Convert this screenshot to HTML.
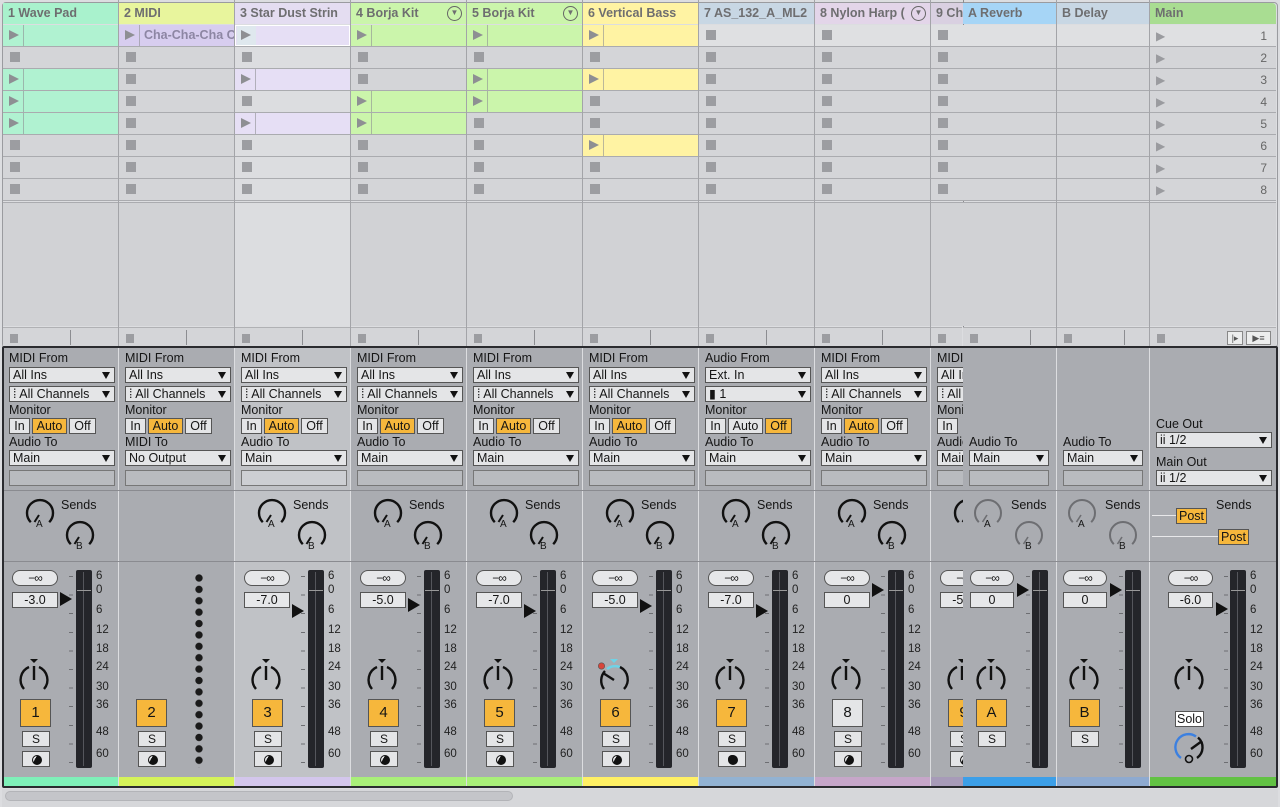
<!DOCTYPE html>
<html><head><meta charset="utf-8">
<style>
*{margin:0;padding:0;box-sizing:border-box}
body{width:1280px;height:807px;position:relative;overflow:hidden;background:#dcdde0;font-family:"Liberation Sans",sans-serif;color:#151515}
.col{position:absolute;top:0;width:116px;height:789px;overflow:hidden}
.hd{position:absolute;left:0;top:3px;width:115px;height:21px;font-size:12.5px;font-weight:bold;color:#6e6e70;line-height:20px;padding-left:5px;white-space:nowrap;overflow:hidden}
.slots{position:absolute;left:0;top:25px;width:115px;height:176px;
background:
linear-gradient(to bottom,transparent 5px,#9c9da1 5px,#9c9da1 15px,transparent 15px) 7px 0/10px 22px repeat-y,
linear-gradient(to bottom,transparent 21px,#aaabaf 21px) 0 0/100% 22px repeat-y,
linear-gradient(#dfe0e2,#dfe0e2) 0 0/100% 21px no-repeat,#d4d5d8}
.empty{position:absolute;left:0;top:202px;width:115px;height:124px;background:#d1d2d5;border-top:1px solid #aaabaf}
.stop{position:absolute;left:0;top:327px;width:115px;height:20px;background:#d4d5d8;border-top:1px solid #b0b1b4}
.stop:before{content:"";position:absolute;left:7px;top:6px;width:8px;height:9px;background:#9c9da1}
.stop:after{content:"";position:absolute;left:67px;top:2px;width:1px;height:15px;background:#8c8d91}
.vs{position:absolute;right:0;top:0;width:1px;height:347px;background:#a3a4a8}
.clip{position:absolute;left:0;width:115px;height:21px}
.clip i{position:absolute;left:6px;top:5px;border-left:10px solid #8e8f93;border-top:5.5px solid transparent;border-bottom:5.5px solid transparent}
.clip b{position:absolute;left:20px;top:0;width:1px;height:21px;background:#8e8f93;opacity:.6}
.mx{position:absolute;left:0;top:348px;width:115px;height:429px;background:#aaacb1}
.sel .mx{background:#c0c2c6}
.hr1{position:absolute;left:0;top:142px;width:116px;height:1px;background:#8a8b90}
.hr2{position:absolute;left:0;top:213px;width:116px;height:1px;background:#8a8b90}
.rs{position:absolute;right:-1px;top:347px;width:1px;height:440px;background:#7d7e83}
.lb{position:absolute;left:6px;font-size:12.5px;line-height:14px;white-space:nowrap}
.dd{position:absolute;left:6px;width:106px;height:16px;background:#e4e5e7;border:1px solid #555;font-size:12.5px;line-height:14px;padding-left:3px;white-space:nowrap;overflow:hidden}
.dd:after{content:"";position:absolute;right:4px;top:4px;border-top:7px solid #111;border-left:4.5px solid transparent;border-right:4.5px solid transparent}
.box{position:absolute;left:6px;width:106px;height:16px;background:#b9bbbf;border:1px solid #777}
.sel .box{background:#cdcfd3}
.bt{position:absolute;height:16px;background:#e4e5e7;border:1px solid #555;font-size:12.5px;line-height:14px;text-align:center}
.on{background:#f6b73c}
.sends{position:absolute;left:58px;top:150px;font-size:12.5px}
.inf{position:absolute;left:9px;top:222px;width:46px;height:16px;border:1px solid #555;border-radius:8px;background:#e6e7e9;font-size:12px;line-height:14px;text-align:center;letter-spacing:-1px}
.val{position:absolute;left:9px;top:244px;width:46px;height:16px;border:1px solid #555;background:#e6e7e9;font-size:12.5px;line-height:14px;text-align:center}
.tri{position:absolute;left:57px;border-left:12px solid #111;border-top:7.5px solid transparent;border-bottom:7.5px solid transparent}
.met{position:absolute;left:73px;top:222px;width:16px;height:198px;background:#24252a;border-radius:2px}
.met:before{content:"";position:absolute;left:7px;top:2px;width:1px;height:194px;background:#55565c}
.met:after{content:"";position:absolute;left:1px;top:20px;width:14px;height:1px;background:#999}
.tk{position:absolute;left:66px;top:228px;width:4px;height:188px;background:repeating-linear-gradient(to bottom,#6d6e72 0,#6d6e72 1px,transparent 1px,transparent 18.6px)}
.sc{position:absolute;left:93px;font-size:11.5px;line-height:12px;color:#222}
.num{position:absolute;left:17px;top:351px;width:31px;height:28px;border:1px solid #555;background:#f6b73c;font-size:15px;line-height:26px;text-align:center}
.sb{position:absolute;left:19px;top:383px;width:28px;height:16px;border:1px solid #555;background:#e4e5e7;font-size:12px;line-height:14px;text-align:center}
.mb{position:absolute;left:19px;top:403px;width:28px;height:16px;border:1px solid #555;background:#e4e5e7}
.mb:after{content:"";position:absolute;left:9px;top:3px;width:8px;height:8px;border-radius:50%;background:linear-gradient(120deg,#e4e5e7 0 30%,#111 30%);border:1.5px solid #111}
.strip{position:absolute;left:0;top:777px;width:115px;height:9px}
svg{position:absolute;overflow:visible}
</style></head><body>
<svg width="0" height="0" style="position:absolute">
<defs>
<symbol id="sk" viewBox="0 0 30 34"><path d="M5.8 24.2 A13 13 0 1 1 24.2 24.2" fill="none" stroke="#111" stroke-width="2.4"/><line x1="14" y1="17" x2="9.5" y2="24" stroke="#111" stroke-width="2"/></symbol>
<symbol id="skg" viewBox="0 0 30 34"><path d="M5.8 24.2 A13 13 0 1 1 24.2 24.2" fill="none" stroke="#6d6e72" stroke-width="2"/><line x1="14" y1="17" x2="9.5" y2="24" stroke="#6d6e72" stroke-width="1.6"/></symbol>
<symbol id="pk" viewBox="0 0 34 40"><path d="M7 31 A14 14 0 0 1 12 9" fill="none" stroke="#111" stroke-width="2.4"/><path d="M22 9 A14 14 0 0 1 27 31" fill="none" stroke="#111" stroke-width="2.4"/><line x1="17" y1="8" x2="17" y2="22" stroke="#111" stroke-width="2.4"/><path d="M13 1 L21 1 L17 5 Z" fill="#111"/></symbol>
</defs></svg>

<div style="position:absolute;left:2px;top:2px;width:1276px;height:346px;border:1px solid #9a9b9f;border-radius:4px"></div>

<!-- Track 1 -->
<div class="col" style="left:3px">
<div class="hd" style="background:#a9f2cd">1 Wave Pad</div>
<div class="slots"></div>
<div class="clip" style="top:25px;background:#b0f2d1"><i></i><b></b></div>
<div class="clip" style="top:69px;background:#b0f2d1"><i></i><b></b></div>
<div class="clip" style="top:91px;background:#b0f2d1"><i></i><b></b></div>
<div class="clip" style="top:113px;background:#b0f2d1"><i></i><b></b></div>
<div class="empty"></div><div class="stop"></div><div class="vs"></div>
<div class="mx"><div class="hr1"></div><div class="hr2"></div>
<div class="lb" style="top:3px">MIDI From</div><div class="dd" style="top:19px">All Ins</div><div class="dd" style="top:38px">⁞ All Channels</div>
<div class="lb" style="top:55px">Monitor</div>
<div class="bt" style="left:6px;top:70px;width:21px">In</div><div class="bt on" style="left:29px;top:70px;width:35px">Auto</div><div class="bt" style="left:66px;top:70px;width:27px">Off</div>
<div class="lb" style="top:87px">Audio To</div><div class="dd" style="top:102px">Main</div><div class="box" style="top:122px"></div>
<svg style="left:22px;top:150px" width="30" height="34"><use href="#sk"/></svg><div style="position:absolute;left:33px;top:171px;font-size:10px">A</div>
<svg style="left:62px;top:172px" width="30" height="34"><use href="#sk"/></svg><div style="position:absolute;left:73px;top:193px;font-size:10px">B</div>
<div class="sends">Sends</div>
<div class="inf">−∞</div><div class="val">-3.0</div><div class="tri" style="top:244px"></div>
<div class="tk"></div><div class="met"></div>
<div class="sc" style="top:222px">6</div><div class="sc" style="top:236px">0</div><div class="sc" style="top:256px">6</div><div class="sc" style="top:276px">12</div><div class="sc" style="top:295px">18</div><div class="sc" style="top:313px">24</div><div class="sc" style="top:333px">30</div><div class="sc" style="top:351px">36</div><div class="sc" style="top:378px">48</div><div class="sc" style="top:400px">60</div>
<svg style="left:14px;top:310px" width="34" height="40"><use href="#pk"/></svg>
<div class="num">1</div><div class="sb">S</div><div class="mb"></div>
</div>
<div class="rs"></div>
<div class="strip" style="background:#7ff0b9"></div>
</div>

<!-- Track 2 -->
<div class="col" style="left:119px">
<div class="hd" style="background:#e8f59d">2 MIDI</div>
<div class="slots"></div>
<div class="clip" style="top:25px;background:#d7cdef"><i></i><b></b><span style="position:absolute;left:25px;top:3px;font-size:12.5px;font-weight:bold;color:#8d86a3;white-space:nowrap">Cha-Cha-Cha C</span></div>
<div class="empty"></div><div class="stop"></div><div class="vs"></div>
<div class="mx"><div class="hr1"></div><div class="hr2"></div>
<div class="lb" style="top:3px">MIDI From</div><div class="dd" style="top:19px">All Ins</div><div class="dd" style="top:38px">⁞ All Channels</div>
<div class="lb" style="top:55px">Monitor</div>
<div class="bt" style="left:6px;top:70px;width:21px">In</div><div class="bt on" style="left:29px;top:70px;width:35px">Auto</div><div class="bt" style="left:66px;top:70px;width:27px">Off</div>
<div class="lb" style="top:87px">MIDI To</div><div class="dd" style="top:102px">No Output</div><div class="box" style="top:122px"></div>
<div style="position:absolute;left:76px;top:226px;width:8px;height:194px;background:radial-gradient(circle at 4px 4px,#1a1a1a 3.4px,transparent 3.9px) 0 0/8px 11.4px repeat-y"></div>
<div class="num">2</div><div class="sb">S</div><div class="mb"></div>
</div>
<div class="rs"></div>
<div class="strip" style="background:#d5f35a"></div>
</div>

<!-- Track 3 -->
<div class="col sel" style="left:235px">
<div class="hd" style="background:#e4ddf1">3 Star Dust Strin</div>
<div class="slots" style="background:linear-gradient(to bottom,transparent 5px,#9c9da1 5px,#9c9da1 15px,transparent 15px) 7px 0/10px 22px repeat-y,linear-gradient(to bottom,transparent 21px,#aaabaf 21px) 0 0/100% 22px repeat-y,#dcdde0"></div>
<div class="clip" style="top:25px;background:#e6dff5;outline:1px solid #fff;outline-offset:-1px"><span style="position:absolute;left:2px;top:1px;width:19px;height:19px;background:#dfe8ee"></span><i></i></div>
<div class="clip" style="top:69px;background:#e6dff5"><i></i><b></b></div>
<div class="clip" style="top:113px;background:#e6dff5"><i></i><b></b></div>
<div class="empty" style="background:#dcdde0"></div><div class="stop"></div><div class="vs"></div>
<div class="mx"><div class="hr1"></div><div class="hr2"></div>
<div class="lb" style="top:3px">MIDI From</div><div class="dd" style="top:19px">All Ins</div><div class="dd" style="top:38px">⁞ All Channels</div>
<div class="lb" style="top:55px">Monitor</div>
<div class="bt" style="left:6px;top:70px;width:21px">In</div><div class="bt on" style="left:29px;top:70px;width:35px">Auto</div><div class="bt" style="left:66px;top:70px;width:27px">Off</div>
<div class="lb" style="top:87px">Audio To</div><div class="dd" style="top:102px">Main</div><div class="box" style="top:122px"></div>
<svg style="left:22px;top:150px" width="30" height="34"><use href="#sk"/></svg><div style="position:absolute;left:33px;top:171px;font-size:10px">A</div>
<svg style="left:62px;top:172px" width="30" height="34"><use href="#sk"/></svg><div style="position:absolute;left:73px;top:193px;font-size:10px">B</div>
<div class="sends">Sends</div>
<div class="inf">−∞</div><div class="val">-7.0</div><div class="tri" style="top:256px"></div>
<div class="tk"></div><div class="met"></div>
<div class="sc" style="top:222px">6</div><div class="sc" style="top:236px">0</div><div class="sc" style="top:256px">6</div><div class="sc" style="top:276px">12</div><div class="sc" style="top:295px">18</div><div class="sc" style="top:313px">24</div><div class="sc" style="top:333px">30</div><div class="sc" style="top:351px">36</div><div class="sc" style="top:378px">48</div><div class="sc" style="top:400px">60</div>
<svg style="left:14px;top:310px" width="34" height="40"><use href="#pk"/></svg>
<div class="num">3</div><div class="sb">S</div><div class="mb"></div>
</div>
<div class="rs"></div>
<div class="strip" style="background:#d3c6ec"></div>
</div>

<!-- Track 4 -->
<div class="col" style="left:351px">
<div class="hd" style="background:#cbf5ab">4 Borja Kit<span style="position:absolute;left:96px;top:3px;width:15px;height:15px;border:1.5px solid #666;border-radius:50%;font-size:8px;line-height:12px;text-align:center">▼</span></div>
<div class="slots"></div>
<div class="clip" style="top:25px;background:#cbf5ab"><i></i><b></b></div>
<div class="clip" style="top:91px;background:#cbf5ab"><i></i><b></b></div>
<div class="clip" style="top:113px;background:#cbf5ab"><i></i><b></b></div>
<div class="empty"></div><div class="stop"></div><div class="vs"></div>
<div class="mx"><div class="hr1"></div><div class="hr2"></div>
<div class="lb" style="top:3px">MIDI From</div><div class="dd" style="top:19px">All Ins</div><div class="dd" style="top:38px">⁞ All Channels</div>
<div class="lb" style="top:55px">Monitor</div>
<div class="bt" style="left:6px;top:70px;width:21px">In</div><div class="bt on" style="left:29px;top:70px;width:35px">Auto</div><div class="bt" style="left:66px;top:70px;width:27px">Off</div>
<div class="lb" style="top:87px">Audio To</div><div class="dd" style="top:102px">Main</div><div class="box" style="top:122px"></div>
<svg style="left:22px;top:150px" width="30" height="34"><use href="#sk"/></svg><div style="position:absolute;left:33px;top:171px;font-size:10px">A</div>
<svg style="left:62px;top:172px" width="30" height="34"><use href="#sk"/></svg><div style="position:absolute;left:73px;top:193px;font-size:10px">B</div>
<div class="sends">Sends</div>
<div class="inf">−∞</div><div class="val">-5.0</div><div class="tri" style="top:250px"></div>
<div class="tk"></div><div class="met"></div>
<div class="sc" style="top:222px">6</div><div class="sc" style="top:236px">0</div><div class="sc" style="top:256px">6</div><div class="sc" style="top:276px">12</div><div class="sc" style="top:295px">18</div><div class="sc" style="top:313px">24</div><div class="sc" style="top:333px">30</div><div class="sc" style="top:351px">36</div><div class="sc" style="top:378px">48</div><div class="sc" style="top:400px">60</div>
<svg style="left:14px;top:310px" width="34" height="40"><use href="#pk"/></svg>
<div class="num">4</div><div class="sb">S</div><div class="mb"></div>
</div>
<div class="rs"></div>
<div class="strip" style="background:#a9ef79"></div>
</div>

<!-- Track 5 -->
<div class="col" style="left:467px">
<div class="hd" style="background:#cbf5ab">5 Borja Kit<span style="position:absolute;left:96px;top:3px;width:15px;height:15px;border:1.5px solid #666;border-radius:50%;font-size:8px;line-height:12px;text-align:center">▼</span></div>
<div class="slots"></div>
<div class="clip" style="top:25px;background:#cbf5ab"><i></i><b></b></div>
<div class="clip" style="top:69px;background:#cbf5ab"><i></i><b></b></div>
<div class="clip" style="top:91px;background:#cbf5ab"><i></i><b></b></div>
<div class="empty"></div><div class="stop"></div><div class="vs"></div>
<div class="mx"><div class="hr1"></div><div class="hr2"></div>
<div class="lb" style="top:3px">MIDI From</div><div class="dd" style="top:19px">All Ins</div><div class="dd" style="top:38px">⁞ All Channels</div>
<div class="lb" style="top:55px">Monitor</div>
<div class="bt" style="left:6px;top:70px;width:21px">In</div><div class="bt on" style="left:29px;top:70px;width:35px">Auto</div><div class="bt" style="left:66px;top:70px;width:27px">Off</div>
<div class="lb" style="top:87px">Audio To</div><div class="dd" style="top:102px">Main</div><div class="box" style="top:122px"></div>
<svg style="left:22px;top:150px" width="30" height="34"><use href="#sk"/></svg><div style="position:absolute;left:33px;top:171px;font-size:10px">A</div>
<svg style="left:62px;top:172px" width="30" height="34"><use href="#sk"/></svg><div style="position:absolute;left:73px;top:193px;font-size:10px">B</div>
<div class="sends">Sends</div>
<div class="inf">−∞</div><div class="val">-7.0</div><div class="tri" style="top:256px"></div>
<div class="tk"></div><div class="met"></div>
<div class="sc" style="top:222px">6</div><div class="sc" style="top:236px">0</div><div class="sc" style="top:256px">6</div><div class="sc" style="top:276px">12</div><div class="sc" style="top:295px">18</div><div class="sc" style="top:313px">24</div><div class="sc" style="top:333px">30</div><div class="sc" style="top:351px">36</div><div class="sc" style="top:378px">48</div><div class="sc" style="top:400px">60</div>
<svg style="left:14px;top:310px" width="34" height="40"><use href="#pk"/></svg>
<div class="num">5</div><div class="sb">S</div><div class="mb"></div>
</div>
<div class="rs"></div>
<div class="strip" style="background:#a9ef79"></div>
</div>

<!-- Track 6 -->
<div class="col" style="left:583px">
<div class="hd" style="background:#fff3a3">6 Vertical Bass</div>
<div class="slots"></div>
<div class="clip" style="top:25px;background:#fff3a3"><i></i><b></b></div>
<div class="clip" style="top:69px;background:#fff3a3"><i></i><b></b></div>
<div class="clip" style="top:135px;background:#fff3a3"><i></i><b></b></div>
<div class="empty"></div><div class="stop"></div><div class="vs"></div>
<div class="mx"><div class="hr1"></div><div class="hr2"></div>
<div class="lb" style="top:3px">MIDI From</div><div class="dd" style="top:19px">All Ins</div><div class="dd" style="top:38px">⁞ All Channels</div>
<div class="lb" style="top:55px">Monitor</div>
<div class="bt" style="left:6px;top:70px;width:21px">In</div><div class="bt on" style="left:29px;top:70px;width:35px">Auto</div><div class="bt" style="left:66px;top:70px;width:27px">Off</div>
<div class="lb" style="top:87px">Audio To</div><div class="dd" style="top:102px">Main</div><div class="box" style="top:122px"></div>
<svg style="left:22px;top:150px" width="30" height="34"><use href="#sk"/></svg><div style="position:absolute;left:33px;top:171px;font-size:10px">A</div>
<svg style="left:62px;top:172px" width="30" height="34"><use href="#sk"/></svg><div style="position:absolute;left:73px;top:193px;font-size:10px">B</div>
<div class="sends">Sends</div>
<div class="inf">−∞</div><div class="val">-5.0</div><div class="tri" style="top:251px"></div>
<div class="tk"></div><div class="met"></div>
<div class="sc" style="top:222px">6</div><div class="sc" style="top:236px">0</div><div class="sc" style="top:256px">6</div><div class="sc" style="top:276px">12</div><div class="sc" style="top:295px">18</div><div class="sc" style="top:313px">24</div><div class="sc" style="top:333px">30</div><div class="sc" style="top:351px">36</div><div class="sc" style="top:378px">48</div><div class="sc" style="top:400px">60</div>
<svg style="left:14px;top:310px" width="34" height="40" viewBox="0 0 34 40"><path d="M7 31 A14 14 0 0 1 8 13" fill="none" stroke="#111" stroke-width="2.4"/><path d="M10 11 A14 14 0 0 1 23 9" fill="none" stroke="#6fd3e6" stroke-width="2.4"/><path d="M23 9 A14 14 0 0 1 27 31" fill="none" stroke="#111" stroke-width="2.4"/><line x1="17" y1="22" x2="6" y2="15" stroke="#111" stroke-width="2.4"/><path d="M13 1 L21 1 L17 5 Z" fill="#6fd3e6"/><circle cx="4.5" cy="8" r="3.2" fill="#d8453a" stroke="#555" stroke-width=".6"/></svg>
<div class="num">6</div><div class="sb">S</div><div class="mb"></div>
</div>
<div class="rs"></div>
<div class="strip" style="background:#fff064"></div>
</div>

<!-- Track 7 -->
<div class="col" style="left:699px">
<div class="hd" style="background:#c8d7e4">7 AS_132_A_ML2</div>
<div class="slots"></div>
<div class="empty"></div><div class="stop"></div><div class="vs"></div>
<div class="mx"><div class="hr1"></div><div class="hr2"></div>
<div class="lb" style="top:3px">Audio From</div><div class="dd" style="top:19px">Ext. In</div><div class="dd" style="top:38px">▮ 1</div>
<div class="lb" style="top:55px">Monitor</div>
<div class="bt" style="left:6px;top:70px;width:21px">In</div><div class="bt" style="left:29px;top:70px;width:35px">Auto</div><div class="bt on" style="left:66px;top:70px;width:27px">Off</div>
<div class="lb" style="top:87px">Audio To</div><div class="dd" style="top:102px">Main</div><div class="box" style="top:122px"></div>
<svg style="left:22px;top:150px" width="30" height="34"><use href="#sk"/></svg><div style="position:absolute;left:33px;top:171px;font-size:10px">A</div>
<svg style="left:62px;top:172px" width="30" height="34"><use href="#sk"/></svg><div style="position:absolute;left:73px;top:193px;font-size:10px">B</div>
<div class="sends">Sends</div>
<div class="inf">−∞</div><div class="val">-7.0</div><div class="tri" style="top:256px"></div>
<div class="tk"></div><div class="met"></div>
<div class="sc" style="top:222px">6</div><div class="sc" style="top:236px">0</div><div class="sc" style="top:256px">6</div><div class="sc" style="top:276px">12</div><div class="sc" style="top:295px">18</div><div class="sc" style="top:313px">24</div><div class="sc" style="top:333px">30</div><div class="sc" style="top:351px">36</div><div class="sc" style="top:378px">48</div><div class="sc" style="top:400px">60</div>
<svg style="left:14px;top:310px" width="34" height="40"><use href="#pk"/></svg>
<div class="num">7</div><div class="sb">S</div><div class="mb" style="background:#e4e5e7"><span style="position:absolute;left:9px;top:3px;width:8px;height:8px;border-radius:50%;background:#111;z-index:2"></span></div>
</div>
<div class="rs"></div>
<div class="strip" style="background:#92b2d2"></div>
</div>

<!-- Track 8 -->
<div class="col" style="left:815px">
<div class="hd" style="background:#e3d5e9">8 Nylon Harp (<span style="position:absolute;left:96px;top:3px;width:15px;height:15px;border:1.5px solid #666;border-radius:50%;font-size:8px;line-height:12px;text-align:center">▼</span></div>
<div class="slots"></div>
<div class="empty"></div><div class="stop"></div><div class="vs"></div>
<div class="mx"><div class="hr1"></div><div class="hr2"></div>
<div class="lb" style="top:3px">MIDI From</div><div class="dd" style="top:19px">All Ins</div><div class="dd" style="top:38px">⁞ All Channels</div>
<div class="lb" style="top:55px">Monitor</div>
<div class="bt" style="left:6px;top:70px;width:21px">In</div><div class="bt on" style="left:29px;top:70px;width:35px">Auto</div><div class="bt" style="left:66px;top:70px;width:27px">Off</div>
<div class="lb" style="top:87px">Audio To</div><div class="dd" style="top:102px">Main</div><div class="box" style="top:122px"></div>
<svg style="left:22px;top:150px" width="30" height="34"><use href="#sk"/></svg><div style="position:absolute;left:33px;top:171px;font-size:10px">A</div>
<svg style="left:62px;top:172px" width="30" height="34"><use href="#sk"/></svg><div style="position:absolute;left:73px;top:193px;font-size:10px">B</div>
<div class="sends">Sends</div>
<div class="inf">−∞</div><div class="val">0</div><div class="tri" style="top:235px"></div>
<div class="tk"></div><div class="met"></div>
<div class="sc" style="top:222px">6</div><div class="sc" style="top:236px">0</div><div class="sc" style="top:256px">6</div><div class="sc" style="top:276px">12</div><div class="sc" style="top:295px">18</div><div class="sc" style="top:313px">24</div><div class="sc" style="top:333px">30</div><div class="sc" style="top:351px">36</div><div class="sc" style="top:378px">48</div><div class="sc" style="top:400px">60</div>
<svg style="left:14px;top:310px" width="34" height="40"><use href="#pk"/></svg>
<div class="num" style="background:#e4e5e7">8</div><div class="sb">S</div><div class="mb"></div>
</div>
<div class="rs"></div>
<div class="strip" style="background:#c6a6c9"></div>
</div>

<!-- Track 9 (clipped) -->
<div class="col" style="left:931px;width:32px">
<div class="hd" style="background:#d9d0e1">9 Cha</div>
<div class="slots"></div>
<div class="empty"></div><div class="stop" style="width:31px"></div>
<div class="mx"><div class="hr1"></div><div class="hr2"></div>
<div class="lb" style="top:3px">MIDI From</div><div class="dd" style="top:19px">All Ins</div><div class="dd" style="top:38px">⁞ All Channels</div>
<div class="lb" style="top:55px">Monitor</div>
<div class="bt" style="left:6px;top:70px;width:21px">In</div>
<div class="lb" style="top:87px">Audio To</div><div class="dd" style="top:102px">Main</div><div class="box" style="top:122px"></div>
<svg style="left:22px;top:150px" width="30" height="34"><use href="#sk"/></svg>
<div class="inf">−∞</div><div class="val">-5.0</div>
<svg style="left:14px;top:310px" width="34" height="40"><use href="#pk"/></svg>
<div class="num">9</div><div class="sb">S</div><div class="mb"></div>
</div>
<div class="strip" style="background:#a79bb8"></div>
</div>

<!-- Return A -->
<div class="col" style="left:963px;width:94px">
<div style="position:absolute;left:-1px;top:0;width:2px;height:787px;background:#8b8c90"></div>
<div class="hd" style="background:#a6d5f6;width:93px">A Reverb</div>
<div class="slots" style="width:93px;background:linear-gradient(to bottom,transparent 21px,#aaabaf 21px) 0 0/100% 22px repeat-y,linear-gradient(#dfe0e2,#dfe0e2) 0 0/100% 21px no-repeat,#d4d5d8"></div>
<div class="empty" style="width:93px"></div><div class="stop" style="width:93px"></div>
<div class="vs"></div>
<div class="mx" style="width:93px"><div class="hr1"></div><div class="hr2"></div>
<div class="lb" style="top:87px">Audio To</div><div class="dd" style="top:102px;width:80px">Main</div><div class="box" style="top:122px;width:80px"></div>
<svg style="left:10px;top:150px" width="30" height="34"><use href="#skg"/></svg><div style="position:absolute;left:21px;top:171px;font-size:10px">A</div>
<svg style="left:51px;top:172px" width="30" height="34"><use href="#skg"/></svg><div style="position:absolute;left:62px;top:193px;font-size:10px">B</div>
<div class="sends" style="left:48px">Sends</div>
<div class="inf" style="left:7px;width:44px">−∞</div><div class="val" style="left:7px;width:44px">0</div><div class="tri" style="left:54px;top:235px"></div>
<div class="tk" style="left:63px"></div><div class="met" style="left:69px"></div>
<svg style="left:11px;top:310px" width="34" height="40"><use href="#pk"/></svg>
<div class="num" style="left:13px">A</div><div class="sb" style="left:15px">S</div>
</div>
<div class="rs"></div>
<div class="strip" style="background:#3c9fe8;width:93px"></div>
</div>

<!-- Return B -->
<div class="col" style="left:1057px;width:93px">
<div class="hd" style="background:#c8d7e4;width:92px">B Delay</div>
<div class="slots" style="width:92px;background:linear-gradient(to bottom,transparent 21px,#aaabaf 21px) 0 0/100% 22px repeat-y,linear-gradient(#dfe0e2,#dfe0e2) 0 0/100% 21px no-repeat,#d4d5d8"></div>
<div class="empty" style="width:92px"></div><div class="stop" style="width:92px"></div>
<div class="vs"></div>
<div class="mx" style="width:92px"><div class="hr1"></div><div class="hr2"></div>
<div class="lb" style="top:87px">Audio To</div><div class="dd" style="top:102px;width:80px">Main</div><div class="box" style="top:122px;width:80px"></div>
<svg style="left:10px;top:150px" width="30" height="34"><use href="#skg"/></svg><div style="position:absolute;left:21px;top:171px;font-size:10px">A</div>
<svg style="left:51px;top:172px" width="30" height="34"><use href="#skg"/></svg><div style="position:absolute;left:62px;top:193px;font-size:10px">B</div>
<div class="sends" style="left:48px">Sends</div>
<div class="inf" style="left:6px;width:44px">−∞</div><div class="val" style="left:6px;width:44px">0</div><div class="tri" style="left:53px;top:235px"></div>
<div class="tk" style="left:62px"></div><div class="met" style="left:68px"></div>
<svg style="left:10px;top:310px" width="34" height="40"><use href="#pk"/></svg>
<div class="num" style="left:12px">B</div><div class="sb" style="left:14px">S</div>
</div>
<div class="rs"></div>
<div class="strip" style="background:#8eaad0;width:92px"></div>
</div>

<!-- Main -->
<div class="col" style="left:1150px;width:127px">
<div class="hd" style="background:#a9dd92;width:126px;border-top-right-radius:4px">Main</div>
<div class="slots" style="width:126px;background:linear-gradient(to bottom,transparent 21px,#aaabaf 21px) 0 0/100% 22px repeat-y,linear-gradient(#dfe0e2,#dfe0e2) 0 0/100% 21px no-repeat,#d4d5d8"></div>
<div style="position:absolute;left:6px;top:25px;font-size:12px;color:#9a9b9f;line-height:22px">▶<br>▶<br>▶<br>▶<br>▶<br>▶<br>▶<br>▶</div>
<div style="position:absolute;right:10px;top:25px;font-size:12px;color:#666;line-height:22px;text-align:right">1<br>2<br>3<br>4<br>5<br>6<br>7<br>8</div>
<div class="empty" style="width:126px"></div>
<div style="position:absolute;left:0;top:327px;width:126px;height:20px;background:#d4d5d8;border-top:1px solid #b0b1b4"><span style="position:absolute;left:7px;top:6px;width:8px;height:9px;background:#9c9da1"></span><span style="position:absolute;left:77px;top:3px;width:16px;height:14px;border:1px solid #888;background:#eceded;font-size:9px;line-height:12px;text-align:center;color:#555">|▸</span><span style="position:absolute;left:96px;top:3px;width:25px;height:14px;border:1px solid #888;background:#eceded;font-size:9px;line-height:12px;text-align:center;color:#555">▶≡</span></div>
<div class="mx" style="width:126px"><div class="hr1" style="width:127px"></div><div class="hr2" style="width:127px"></div>
<div class="lb" style="top:69px">Cue Out</div><div class="dd" style="top:84px;width:116px">ii 1/2</div>
<div class="lb" style="top:107px">Main Out</div><div class="dd" style="top:122px;width:116px">ii 1/2</div>
<div style="position:absolute;left:2px;top:167px;width:24px;height:1px;background:#e8e8ea"></div>
<div class="bt on" style="left:26px;top:160px;width:31px">Post</div>
<div style="position:absolute;left:2px;top:188px;width:66px;height:1px;background:#e8e8ea"></div>
<div class="bt on" style="left:68px;top:181px;width:31px">Post</div>
<div class="sends" style="left:66px">Sends</div>
<div class="inf" style="left:18px;width:45px">−∞</div><div class="val" style="left:18px;width:45px">-6.0</div><div class="tri" style="left:66px;top:254px"></div>
<div class="tk" style="left:74px"></div><div class="met" style="left:80px"></div>
<div class="sc" style="left:100px;top:222px">6</div><div class="sc" style="left:100px;top:236px">0</div><div class="sc" style="left:100px;top:256px">6</div><div class="sc" style="left:100px;top:276px">12</div><div class="sc" style="left:100px;top:295px">18</div><div class="sc" style="left:100px;top:313px">24</div><div class="sc" style="left:100px;top:333px">30</div><div class="sc" style="left:100px;top:351px">36</div><div class="sc" style="left:100px;top:378px">48</div><div class="sc" style="left:100px;top:400px">60</div>
<svg style="left:22px;top:310px" width="34" height="40"><use href="#pk"/></svg>
<div class="bt" style="left:25px;top:363px;width:29px;background:#fff">Solo</div>
<svg style="left:24px;top:384px" width="34" height="34" viewBox="0 0 34 34"><path d="M7 26 A13 13 0 0 1 22 4.5" fill="none" stroke="#3c80e0" stroke-width="2.4"/><path d="M24 5.5 A13 13 0 0 1 23 26" fill="none" stroke="#111" stroke-width="2.4"/><line x1="17" y1="17" x2="28" y2="9" stroke="#111" stroke-width="2.4"/><circle cx="15" cy="27" r="3.5" fill="none" stroke="#111" stroke-width="1.6"/></svg>
</div>
<div class="strip" style="background:#62c244;width:126px"></div>
</div>

<div style="position:absolute;left:2px;top:346px;width:1276px;height:442px;border:2px solid #2a2b2f;border-radius:2px"></div>
<div style="position:absolute;left:2px;top:789px;width:1276px;height:18px;background:#d6d7da"></div>
<div style="position:absolute;left:5px;top:791px;width:508px;height:10px;border-radius:5px;background:#c4c5c9;border:1px solid #b3b4b8"></div>
</body></html>
